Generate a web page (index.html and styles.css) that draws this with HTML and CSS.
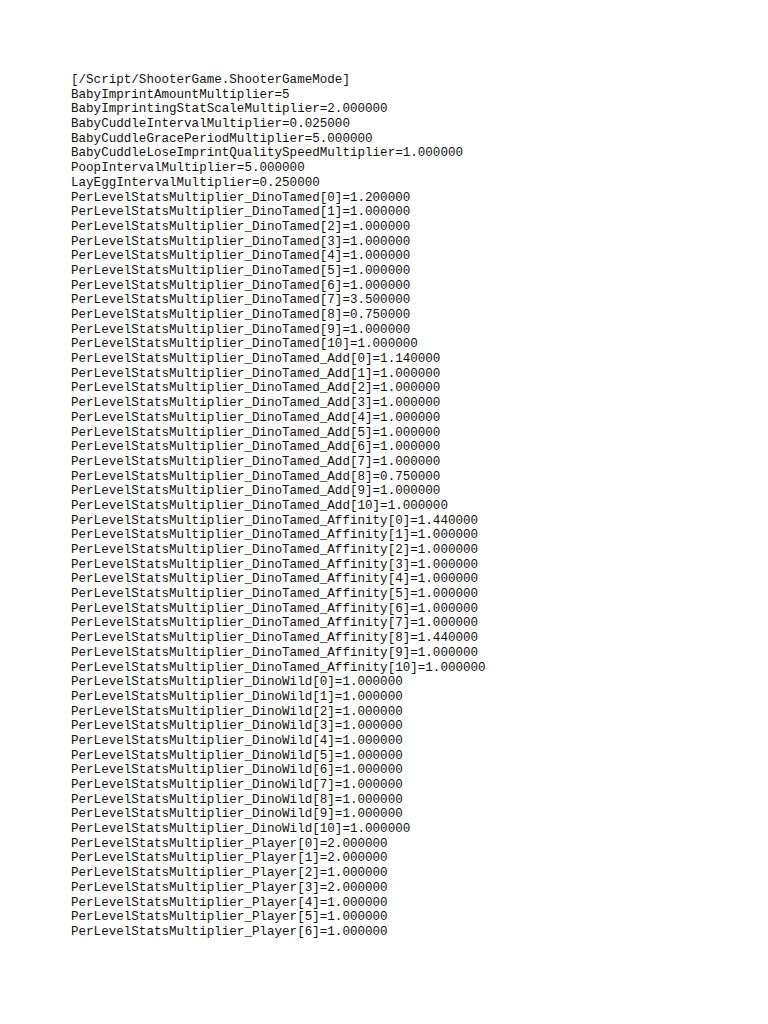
FILE: index.html
```html
<!DOCTYPE html>
<html>
<head>
<meta charset="utf-8">
<link rel="stylesheet" href="styles.css">
</head>
<body>
<pre class="doc">[/Script/ShooterGame.ShooterGameMode]
BabyImprintAmountMultiplier=5
BabyImprintingStatScaleMultiplier=2.000000
BabyCuddleIntervalMultiplier=0.025000
BabyCuddleGracePeriodMultiplier=5.000000
BabyCuddleLoseImprintQualitySpeedMultiplier=1.000000
PoopIntervalMultiplier=5.000000
LayEggIntervalMultiplier=0.250000
PerLevelStatsMultiplier_DinoTamed[0]=1.200000
PerLevelStatsMultiplier_DinoTamed[1]=1.000000
PerLevelStatsMultiplier_DinoTamed[2]=1.000000
PerLevelStatsMultiplier_DinoTamed[3]=1.000000
PerLevelStatsMultiplier_DinoTamed[4]=1.000000
PerLevelStatsMultiplier_DinoTamed[5]=1.000000
PerLevelStatsMultiplier_DinoTamed[6]=1.000000
PerLevelStatsMultiplier_DinoTamed[7]=3.500000
PerLevelStatsMultiplier_DinoTamed[8]=0.750000
PerLevelStatsMultiplier_DinoTamed[9]=1.000000
PerLevelStatsMultiplier_DinoTamed[10]=1.000000
PerLevelStatsMultiplier_DinoTamed_Add[0]=1.140000
PerLevelStatsMultiplier_DinoTamed_Add[1]=1.000000
PerLevelStatsMultiplier_DinoTamed_Add[2]=1.000000
PerLevelStatsMultiplier_DinoTamed_Add[3]=1.000000
PerLevelStatsMultiplier_DinoTamed_Add[4]=1.000000
PerLevelStatsMultiplier_DinoTamed_Add[5]=1.000000
PerLevelStatsMultiplier_DinoTamed_Add[6]=1.000000
PerLevelStatsMultiplier_DinoTamed_Add[7]=1.000000
PerLevelStatsMultiplier_DinoTamed_Add[8]=0.750000
PerLevelStatsMultiplier_DinoTamed_Add[9]=1.000000
PerLevelStatsMultiplier_DinoTamed_Add[10]=1.000000
PerLevelStatsMultiplier_DinoTamed_Affinity[0]=1.440000
PerLevelStatsMultiplier_DinoTamed_Affinity[1]=1.000000
PerLevelStatsMultiplier_DinoTamed_Affinity[2]=1.000000
PerLevelStatsMultiplier_DinoTamed_Affinity[3]=1.000000
PerLevelStatsMultiplier_DinoTamed_Affinity[4]=1.000000
PerLevelStatsMultiplier_DinoTamed_Affinity[5]=1.000000
PerLevelStatsMultiplier_DinoTamed_Affinity[6]=1.000000
PerLevelStatsMultiplier_DinoTamed_Affinity[7]=1.000000
PerLevelStatsMultiplier_DinoTamed_Affinity[8]=1.440000
PerLevelStatsMultiplier_DinoTamed_Affinity[9]=1.000000
PerLevelStatsMultiplier_DinoTamed_Affinity[10]=1.000000
PerLevelStatsMultiplier_DinoWild[0]=1.000000
PerLevelStatsMultiplier_DinoWild[1]=1.000000
PerLevelStatsMultiplier_DinoWild[2]=1.000000
PerLevelStatsMultiplier_DinoWild[3]=1.000000
PerLevelStatsMultiplier_DinoWild[4]=1.000000
PerLevelStatsMultiplier_DinoWild[5]=1.000000
PerLevelStatsMultiplier_DinoWild[6]=1.000000
PerLevelStatsMultiplier_DinoWild[7]=1.000000
PerLevelStatsMultiplier_DinoWild[8]=1.000000
PerLevelStatsMultiplier_DinoWild[9]=1.000000
PerLevelStatsMultiplier_DinoWild[10]=1.000000
PerLevelStatsMultiplier_Player[0]=2.000000
PerLevelStatsMultiplier_Player[1]=2.000000
PerLevelStatsMultiplier_Player[2]=1.000000
PerLevelStatsMultiplier_Player[3]=2.000000
PerLevelStatsMultiplier_Player[4]=1.000000
PerLevelStatsMultiplier_Player[5]=1.000000
PerLevelStatsMultiplier_Player[6]=1.000000</pre>
</body>
</html>
```

FILE: styles.css
```css
html, body {
  margin: 0;
  padding: 0;
  background: #ffffff;
}

.doc {
  margin: 0;
  padding: 73px 0 0 71px;
  font-family: "Liberation Mono", "Courier New", monospace;
  font-size: 12.57px;
  line-height: 14.69px;
  color: #111111;
  white-space: pre;
}
```
